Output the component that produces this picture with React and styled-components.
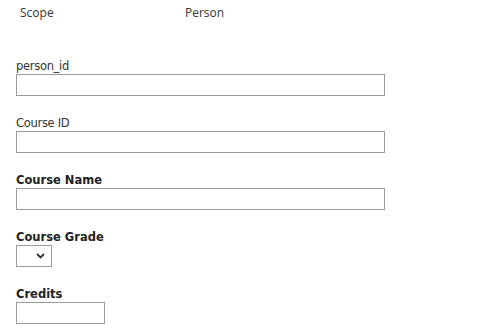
import React from "react";
import styled, { createGlobalStyle } from "styled-components";

const GlobalStyle = createGlobalStyle`
  body {
    margin: 0;
    background: #ffffff;
    font-family: "DejaVu Sans", Verdana, sans-serif;
    color: #333333;
  }
`;

const Page = styled.div`
  width: 499px;
  height: 334px;
  overflow: hidden;
`;

const HeaderRow = styled.div`
  display: grid;
  grid-template-columns: 165px 120px;
  padding: 4px 0 0 20px;
  height: 17px;
  font-family: "Open Sans", "Noto Sans", sans-serif;
  font-size: 12px;
  line-height: 17px;
  color: #333333;
`;

const Form = styled.div`
  display: flex;
  flex-direction: column;
  gap: 20px;
  padding: 38px 0 0 16px;
`;

const Field = styled.div`
  display: flex;
  flex-direction: column;
  align-items: flex-start;
`;

const Label = styled.label`
  font-family: "DejaVu Sans", Verdana, sans-serif;
  font-size: 11.5px;
  line-height: 15px;
  height: 15px;
  letter-spacing: ${(p) => (p.$bold ? "0px" : "-0.3px")};
  font-weight: ${(p) => (p.$bold ? 700 : 400)};
  color: ${(p) => (p.$bold ? "#222222" : "#333333")};
`;

const TextInput = styled.input`
  box-sizing: border-box;
  width: ${(p) => p.$width}px;
  height: 22px;
  margin: 0;
  padding: 2px 4px;
  border: 1px solid #9a9a9a;
  border-radius: 0;
  background: #ffffff;
  font-family: "DejaVu Sans", Verdana, sans-serif;
  font-size: 12px;
  outline: none;
`;

const SelectWrap = styled.div`
  position: relative;
  width: 36px;
  height: 22px;
`;

const Select = styled.select`
  box-sizing: border-box;
  appearance: none;
  -webkit-appearance: none;
  width: 36px;
  height: 22px;
  margin: 0;
  border: 1px solid #9a9a9a;
  border-radius: 0;
  background: #ffffff;
  outline: none;
`;

const Chevron = styled.svg`
  position: absolute;
  left: 20px;
  top: 8px;
  pointer-events: none;
`;

export default function App() {
  return (
    <Page>
      <GlobalStyle />
      <HeaderRow>
        <span>Scope</span>
        <span>Person</span>
      </HeaderRow>
      <Form>
        <Field>
          <Label>person_id</Label>
          <TextInput $width={369} />
        </Field>
        <Field>
          <Label>Course ID</Label>
          <TextInput $width={369} />
        </Field>
        <Field>
          <Label $bold>Course Name</Label>
          <TextInput $width={369} />
        </Field>
        <Field>
          <Label $bold>Course Grade</Label>
          <SelectWrap>
            <Select>
              <option value=""></option>
            </Select>
            <Chevron width="9" height="6" viewBox="0 0 9 6">
              <path d="M1 1 L4.5 4.5 L8 1" fill="none" stroke="#333" strokeWidth="1.8" />
            </Chevron>
          </SelectWrap>
        </Field>
        <Field>
          <Label $bold>Credits</Label>
          <TextInput $width={89} />
        </Field>
      </Form>
    </Page>
  );
}
